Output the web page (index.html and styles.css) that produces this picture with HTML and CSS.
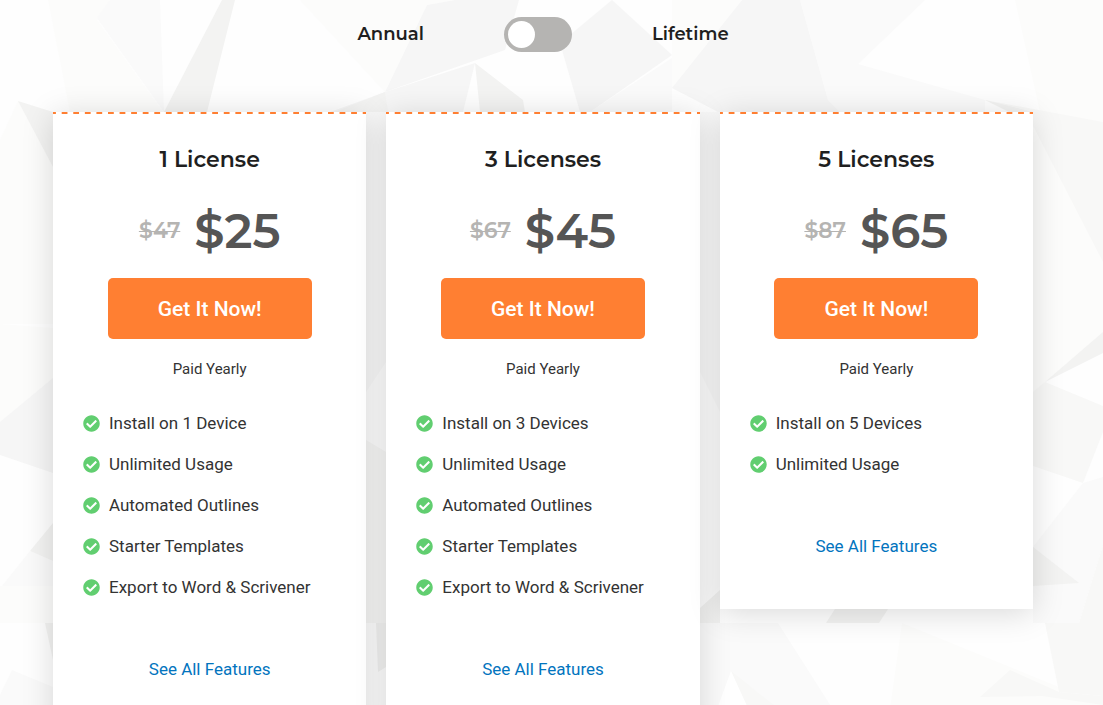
FILE: index.html
```html
<!DOCTYPE html>
<html lang="en">
<head>
<meta charset="utf-8">
<meta name="viewport" content="width=device-width, initial-scale=1">
<title>Pricing</title>
<link rel="stylesheet" href="styles.css">
</head>
<body>
<svg class="defs" aria-hidden="true">
  <symbol id="check" viewBox="0 0 512 512"><path d="M504 256c0 137-111 248-248 248S8 393 8 256 119 8 256 8s248 111 248 248zM227.300 387.300l184-184c6.200-6.200 6.200-16.400 0-22.600l-22.600-22.600c-6.200-6.200-16.400-6.200-22.600 0L216 308.100l-70.100-70.100c-6.200-6.200-16.400-6.200-22.600 0l-22.600 22.600c-6.200 6.200-6.200 16.400 0 22.600l104 104c6.200 6.300 16.400 6.300 22.600.1z"/></symbol>
</svg>
<main class="page">
  <svg class="facets" viewBox="0 0 1103 780" aria-hidden="true">
    <g fill="#fcfcfb">
      <path d="M48 0h62L97 20l66 92H70z"/>
      <path d="M300 0h155l-28 5-42 87z"/>
      <path d="M1015 0h88v122l-63-10z"/>
      <path d="M902 623l201 82v75H880z"/>
      <path d="M0 324l53 4v50L0 422zM0 586h53v37H0z"/>
      <path d="M742 0L672 88V0z"/>
      <path d="M18 101l35 57v166H0V140z"/>
      <path d="M1033 120l70 142v70l-58 50-12 10z"/>
    </g>
    <g fill="#fafafa">
      <path d="M110 0h50l4 112L97 18z"/>
      <path d="M672 58v54h-82z"/>
      <path d="M800 0h125l-67 64 127 36v12H840l-12-12z"/>
      <path d="M1083 483l20-6v68l-24 78h-46v-76z"/>
      <path d="M700 623h78l100 157H700z"/>
      <path d="M30 551L2 586h51v-25zM12 670l41 17v93H0v-85z"/>
      <path d="M366 112h20v250l-20 30zM700 112h20v300l-20-40z"/>
    </g>
    <g fill="#f6f6f6">
      <path d="M427 5l28-5h64l-14 50-120 42z"/>
      <path d="M385 92l90-29-12 49H330z"/>
      <path d="M612 0l60 55-82 57h-10l-18-62 8-15z"/>
      <path d="M672 88l70-88h58l28 100 12 12H718z"/>
      <path d="M53 378v95L0 455v-33z"/>
    </g>
    <g fill="#f8f8f7">
      <path d="M985 100l118 22v140l-73-142z"/>
      <path d="M1033 392l12-10 58 24v26l-20 51-50-17z"/>
      <path d="M1045 623h58v73l-44-4z"/>
      <path d="M1103 545v78h-24z"/>
      <path d="M1010 670l49 22 44 4v9l-61-9-62 1z"/>
      <path d="M731 671l120 95-80-5z"/>
      <path d="M366 440l20 12v171h-20z"/>
    </g>
    <g fill="#f3f3f2">
      <path d="M222 0h13l-28 112h-43z"/>
      <path d="M385 92l3 20h-53z"/>
      <path d="M475 63l48 37 2 12h-45z"/>
      <path d="M18 101l35 11v55z"/>
      <path d="M53 523v38l-23-10zM45 623h8v37z"/>
      <path d="M1045 382l58-50v21z"/>
      <path d="M1033 547l46 36-46 3z"/>
      <path d="M985 100l48 12v12z"/>
      <path d="M835 609h53l-9 14h-53z"/>
      <path d="M700 608l20-18v33h-20z"/>
      <path d="M376 623h10v44l-8 5z"/>
    </g>
    <path fill="#fff" d="M731 671l-40 109h90z"/>
  </svg>

  <div class="billing">
    <label class="billing-label" for="billing">Annual</label>
    <input class="switch" type="checkbox" role="switch" id="billing">
    <label class="billing-label" for="billing">Lifetime</label>
  </div>

  <div class="plans">
    <section class="plan">
      <h2 class="plan-name">1 License</h2>
      <p class="price"><s class="was">$47</s><strong class="now">$25</strong></p>
      <button class="buy" type="button">Get It Now!</button>
      <p class="term">Paid Yearly</p>
      <ul class="features">
        <li><svg class="tick"><use href="#check"/></svg>Install on 1 Device</li>
        <li><svg class="tick"><use href="#check"/></svg>Unlimited Usage</li>
        <li><svg class="tick"><use href="#check"/></svg>Automated Outlines</li>
        <li><svg class="tick"><use href="#check"/></svg>Starter Templates</li>
        <li><svg class="tick"><use href="#check"/></svg>Export to Word &amp; Scrivener</li>
      </ul>
      <a class="more" href="#">See All Features</a>
    </section>
    <section class="plan">
      <h2 class="plan-name">3 Licenses</h2>
      <p class="price"><s class="was">$67</s><strong class="now">$45</strong></p>
      <button class="buy" type="button">Get It Now!</button>
      <p class="term">Paid Yearly</p>
      <ul class="features">
        <li><svg class="tick"><use href="#check"/></svg>Install on 3 Devices</li>
        <li><svg class="tick"><use href="#check"/></svg>Unlimited Usage</li>
        <li><svg class="tick"><use href="#check"/></svg>Automated Outlines</li>
        <li><svg class="tick"><use href="#check"/></svg>Starter Templates</li>
        <li><svg class="tick"><use href="#check"/></svg>Export to Word &amp; Scrivener</li>
      </ul>
      <a class="more" href="#">See All Features</a>
    </section>
    <section class="plan">
      <h2 class="plan-name">5 Licenses</h2>
      <p class="price"><s class="was">$87</s><strong class="now">$65</strong></p>
      <button class="buy" type="button">Get It Now!</button>
      <p class="term">Paid Yearly</p>
      <ul class="features">
        <li><svg class="tick"><use href="#check"/></svg>Install on 5 Devices</li>
        <li><svg class="tick"><use href="#check"/></svg>Unlimited Usage</li>
      </ul>
      <a class="more" href="#">See All Features</a>
    </section>
  </div>
</main>
</body>
</html>
```

FILE: styles.css
```css
* {
  box-sizing: border-box;
}

body {
  margin: 0;
  background: #fefefe;
  color: #333;
  font-family: Roboto, "Liberation Sans", sans-serif;
  font-size: 17px;
  line-height: 27px;
}

.defs {
  position: absolute;
  width: 0;
  height: 0;
}

.page {
  position: relative;
  min-height: 100vh;
  padding: 17px 70px 40px 53px;
  overflow: hidden;
}

.facets {
  position: absolute;
  inset: 0 0 auto;
  z-index: -1;
  width: 100%;
}

.billing {
  display: flex;
  justify-content: center;
  align-items: center;
  gap: 80px;
  margin-bottom: 60px;
}

.billing-label {
  color: #1f1f1f;
  font-family: Montserrat, Inter, sans-serif;
  font-size: 18px;
  font-weight: 600;
}

.switch {
  appearance: none;
  display: flex;
  align-items: center;
  width: 68px;
  height: 35px;
  margin: 0;
  padding: 4px;
  border-radius: 18px;
  background: #b5b4b2;
  cursor: pointer;
}

.switch::before {
  content: "";
  width: 27px;
  height: 27px;
  border-radius: 50%;
  background: #fff;
}

.switch:checked {
  justify-content: flex-end;
  background: #ff7f32;
}

.plans {
  display: grid;
  grid-template-columns: repeat(3, 1fr);
  align-items: start;
  gap: 20px;
  max-width: 980px;
  margin: 0 auto;
}

.plan {
  display: flex;
  flex-direction: column;
  align-items: center;
  padding: 34px 30px 49px;
  background: linear-gradient(90deg, #ff7f32 27%, transparent 27% 73%, #ff7f32 73%) 0 0 / calc(100% / 27) 2px repeat-x #fff;
  box-shadow: 0 4px 30px rgba(0, 0, 0, 0.15);
}

.plan-name {
  margin: 0 0 27px;
  color: #1f1f1f;
  font-family: Montserrat, Inter, sans-serif;
  font-size: 22px;
  font-weight: 600;
  line-height: 28px;
}

.price {
  display: flex;
  align-items: center;
  gap: 14px;
  margin: 0 0 17px;
  font-family: Montserrat, Inter, sans-serif;
  font-weight: 600;
  line-height: 60px;
}

.was {
  color: #b5b4b2;
  font-size: 22px;
  text-decoration-thickness: 1px;
}

.now {
  color: #555;
  font-size: 48px;
  font-weight: 600;
}

.buy {
  padding: 18px 50px 16px;
  border: 0;
  border-radius: 5px;
  background: #ff7f32;
  color: #fff;
  font: 500 21px/27px Roboto, "Liberation Sans", sans-serif;
  cursor: pointer;
}

.term {
  margin: 18px 0 22px;
  font-size: 15px;
  line-height: 24px;
}

.features {
  align-self: stretch;
  margin: 0 0 48px;
  padding: 0;
  list-style: none;
}

.features li {
  display: flex;
  align-items: center;
  gap: 9px;
  line-height: 41px;
}

.tick {
  flex: none;
  width: 17px;
  height: 17px;
  fill: #61ce70;
}

.more {
  color: #0274be;
  text-decoration: none;
}
```
